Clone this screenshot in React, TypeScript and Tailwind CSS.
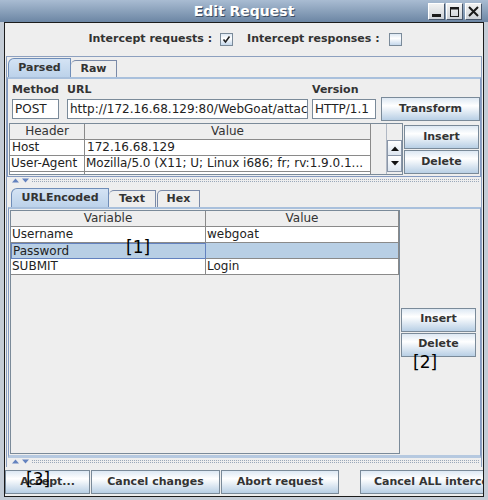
import React from "react";

const btn =
  "bg-[linear-gradient(to_bottom,#dde8f3_0%,#ffffff_35%,#b8cfe5_100%)] border border-[#7a8a99] text-[#333333] font-bold text-[11px] flex items-center justify-center whitespace-nowrap";

function Check({ checked }: { checked: boolean }) {
  return (
    <div className="w-[13px] h-[13px] border border-[#7a8a99] bg-[linear-gradient(to_bottom,#dde8f3,#ffffff_40%,#c5d8ec)] flex items-center justify-center">
      {checked && (
        <svg width="9" height="9" viewBox="0 0 9 9">
          <path d="M1.5 4.5 L3.5 7 L7.5 1.5" stroke="#222" strokeWidth="1.6" fill="none" />
        </svg>
      )}
    </div>
  );
}

function TitleBtn({ children }: { children: React.ReactNode }) {
  return (
    <div className="w-[17px] h-[17px] bg-[linear-gradient(to_bottom,#f2f2f2,#cdd2d8)] border border-t-white border-l-white border-r-[#48566a] border-b-[#48566a] flex items-center justify-center">
      {children}
    </div>
  );
}

function Arrows() {
  return (
    <svg width="18" height="5" viewBox="0 0 18 5" className="shrink-0">
      <path d="M0 4.5 L3.5 0.5 L7 4.5 Z" fill="#6382bf" />
      <path d="M10 0.5 L17 0.5 L13.5 4.5 Z" fill="#6382bf" />
    </svg>
  );
}

function Divider({ h }: { h: string }) {
  return (
    <div className={"flex items-start pl-[5px] pr-[2px] gap-[2px] shrink-0 " + h}>
      <div className="mt-[1px]">
        <Arrows />
      </div>
      <div className="flex-1 mt-[2px] h-[3px] border-y border-dotted border-[#9aa8ba]" />
    </div>
  );
}

export default function App() {
  return (
    <div className="w-[488px] h-[500px] overflow-hidden flex flex-col bg-[#c4ccd6] font-['DejaVu_Sans',sans-serif] relative">
      {/* Title bar */}
      <div className="h-[22px] shrink-0 flex items-center bg-[linear-gradient(to_bottom,#a9bcd2,#6c86a4)]">
        <div className="w-[60px]" />
        <div className="flex-1 text-center text-white font-bold text-[14px] leading-[22px] [text-shadow:1px_1px_0_#3d4d62]">
          Edit Request
        </div>
        <div className="w-[60px] flex items-center">
          <TitleBtn>
            <svg width="11" height="11" viewBox="0 0 11 11">
              <rect x="1" y="8" width="9" height="3" fill="#1a1a1a" />
            </svg>
          </TitleBtn>
          <div className="w-[1px]" />
          <TitleBtn>
            <svg width="11" height="11" viewBox="0 0 11 11">
              <rect x="1.5" y="1.5" width="8" height="9" stroke="#1a1a1a" strokeWidth="1" fill="none" />
              <rect x="1" y="1" width="9" height="2.5" fill="#1a1a1a" />
            </svg>
          </TitleBtn>
          <div className="w-[2px]" />
          <TitleBtn>
            <svg width="11" height="11" viewBox="0 0 11 11">
              <path d="M1 1 L10 10 M10 1 L1 10" stroke="#1a1a1a" strokeWidth="2" />
            </svg>
          </TitleBtn>
        </div>
      </div>

      {/* Content */}
      <div className="h-[475px] shrink-0 mx-[4px] border border-[#1c1c1c] bg-[#eeeeee] flex flex-col text-[#333333]">
        {/* Intercept row */}
        <div className="h-[33px] shrink-0 flex items-center justify-center font-bold text-[11px] pl-[2px]">
          <span>Intercept requests :</span>
          <div className="w-[8px]" />
          <Check checked />
          <div className="w-[14px]" />
          <span>Intercept responses :</span>
          <div className="w-[9px]" />
          <Check checked={false} />
        </div>

        {/* Split pane */}
        <div className="flex-1 mx-[1px] border-t border-x border-[#8da0bf] flex flex-col">
          {/* Top tabs */}
          <div className="h-[20px] shrink-0 flex items-end pl-[1px]">
            <div className="w-[63px] h-[19px] bg-[linear-gradient(to_bottom,#d4e3f4,#bcd2ea)] border border-b-0 border-[#6f8db8] rounded-tl-[6px] flex items-center justify-center font-bold text-[11px]">
              Parsed
            </div>
            <div className="w-[46px] h-[17px] bg-[#eeeeee] border border-l-0 border-b-0 border-[#7a8aa8] rounded-tl-[5px] flex items-center justify-center font-bold text-[11px]">
              Raw
            </div>
          </div>
          <div className="h-[100px] shrink-0 border border-[#8399c0] border-t-2 border-t-[#a9c0dc] flex flex-col">
            {/* Form row */}
            <div className="flex pt-[2px] pl-[4px]">
              <div className="w-[47px] flex flex-col">
                <div className="h-[18px] leading-[17px] font-bold text-[11px]">Method</div>
                <div className="h-[20px] border border-[#7a8a99] bg-white text-[12px] leading-[18px] px-[2px] text-[#222] overflow-hidden whitespace-nowrap">
                  POST
                </div>
              </div>
              <div className="w-[8px]" />
              <div className="w-[241px] flex flex-col">
                <div className="h-[18px] leading-[17px] font-bold text-[11px]">URL</div>
                <div className="h-[20px] border border-[#7a8a99] bg-white text-[12px] leading-[18px] px-[2px] text-[#222] overflow-hidden whitespace-nowrap">
                  http://172.16.68.129:80/WebGoat/attack?Screen=66
                </div>
              </div>
              <div className="w-[4px]" />
              <div className="w-[64px] flex flex-col">
                <div className="h-[18px] leading-[17px] font-bold text-[11px]">Version</div>
                <div className="h-[20px] border border-[#7a8a99] bg-white text-[12px] leading-[18px] px-[2px] text-[#222] overflow-hidden whitespace-nowrap">
                  HTTP/1.1
                </div>
              </div>
              <div className="w-[5px]" />
              <div className="w-[99px] flex flex-col">
                <div className="h-[16px]" />
                <div className={btn + " h-[24px]"}>Transform</div>
              </div>
            </div>
            {/* Header table row */}
            <div className="flex mt-[2px] pl-[1px]">
              <div className="w-[394px] h-[52px] border border-[#7a8a99] flex overflow-hidden">
                <div className="w-[376px] flex flex-col bg-[#eeeeee]">
                  <div className="h-[16px] flex text-[12px] leading-[15px] text-[#333]">
                    <div className="w-[75px] border-r border-b border-[#8a8a8a] text-center">Header</div>
                    <div className="w-[286px] border-r border-b border-[#8a8a8a] text-center">Value</div>
                  </div>
                  <div className="h-[16px] flex text-[12px] leading-[15px] text-[#222]">
                    <div className="w-[75px] bg-white border-r border-b border-[#8a8a8a] px-[2px] whitespace-nowrap overflow-hidden">Host</div>
                    <div className="w-[286px] bg-white border-r border-b border-[#8a8a8a] px-[2px] whitespace-nowrap overflow-hidden">172.16.68.129</div>
                  </div>
                  <div className="h-[16px] flex text-[12px] leading-[15px] text-[#222]">
                    <div className="w-[75px] bg-white border-r border-b border-[#8a8a8a] px-[1px] whitespace-nowrap overflow-hidden">User-Agent</div>
                    <div className="w-[286px] bg-white border-r border-b border-[#8a8a8a] px-[1px] whitespace-nowrap overflow-hidden">
                      Mozilla/5.0 (X11; U; Linux i686; fr; rv:1.9.0.1...
                    </div>
                  </div>
                  <div className="h-[2px] flex">
                    <div className="w-[75px] bg-white border-r border-[#8a8a8a]" />
                    <div className="w-[286px] bg-white border-r border-[#8a8a8a]" />
                  </div>
                </div>
                <div className="w-[16px] flex flex-col border-l border-[#b0b8c4] bg-[#eeeeee]">
                  <div className="h-[16px]" />
                  <div className="h-[16px] border border-[#8a96a8] bg-[linear-gradient(to_bottom,#ffffff,#dde6f0)] flex items-center justify-center">
                    <svg width="8" height="5" viewBox="0 0 8 5">
                      <path d="M0 5 L4 0.5 L8 5 Z" fill="#111" />
                    </svg>
                  </div>
                  <div className="h-[16px] border border-t-0 border-[#8a96a8] bg-[linear-gradient(to_bottom,#ffffff,#dde6f0)] flex items-center justify-center">
                    <svg width="8" height="5" viewBox="0 0 8 5">
                      <path d="M0 0 L8 0 L4 4.5 Z" fill="#111" />
                    </svg>
                  </div>
                </div>
              </div>
              <div className="ml-[1px] pt-[2px] flex flex-col gap-[1px]">
                <div className={btn + " w-[75px] h-[24px]"}>Insert</div>
                <div className={btn + " w-[75px] h-[24px]"}>Delete</div>
              </div>
            </div>
          </div>

          <Divider h="h-[7px]" />

          {/* Lower tabbed pane */}
          <div className="pt-[3px] ml-[1px] flex flex-col">
            <div className="h-[20px] flex items-end pl-[3px]">
              <div className="w-[98px] h-[19px] bg-[linear-gradient(to_bottom,#d4e3f4,#bcd2ea)] border border-b-0 border-[#6f8db8] rounded-tl-[6px] flex items-center justify-center font-bold text-[11px]">
                URLEncoded
              </div>
              <div className="w-[47px] h-[17px] bg-[#eeeeee] border border-l-0 border-b-0 border-[#7a8aa8] rounded-tl-[5px] flex items-center justify-center font-bold text-[11px]">
                Text
              </div>
              <div className="ml-[1px] w-[43px] h-[17px] bg-[#eeeeee] border border-b-0 border-[#7a8aa8] rounded-tl-[5px] flex items-center justify-center font-bold text-[11px]">
                Hex
              </div>
            </div>
            <div className="h-[251px] border border-[#8399c0] border-t-2 border-t-[#a9c0dc] border-b-[3px] border-b-[#b6c9e0] flex">
              <div className="ml-[1px] mt-[1px] w-[390px] h-[244px] border border-[#7a8a99] bg-[#eeeeee] flex flex-col">
                <div className="h-[16px] flex text-[12px] leading-[15px] text-[#333]">
                  <div className="w-[195px] border-r border-b border-[#8a8a8a] text-center">Variable</div>
                  <div className="w-[193px] border-r border-b border-[#8a8a8a] text-center">Value</div>
                </div>
                <div className="h-[16px] flex text-[12px] leading-[15px] text-[#222]">
                  <div className="w-[195px] bg-white border-r border-b border-[#8a8a8a] px-[1px]">Username</div>
                  <div className="w-[193px] bg-white border-r border-b border-[#8a8a8a] px-[1px]">webgoat</div>
                </div>
                <div className="h-[16px] flex text-[12px] leading-[14px] text-[#222]">
                  <div className="w-[195px] bg-[#b8cfe5] border border-[#6382bf] px-[1px]">Password</div>
                  <div className="w-[193px] bg-[#b8cfe5] border-r border-b border-[#8a8a8a] px-[1px]" />
                </div>
                <div className="h-[16px] flex text-[12px] leading-[15px] text-[#222]">
                  <div className="w-[195px] bg-white border-r border-b border-[#8a8a8a] px-[1px]">SUBMIT</div>
                  <div className="w-[193px] bg-white border-r border-b border-[#8a8a8a] px-[1px]">Login</div>
                </div>
              </div>
              <div className="ml-[1px] flex flex-col justify-center gap-[1px]">
                <div className={btn + " w-[75px] h-[24px]"}>Insert</div>
                <div className={btn + " w-[75px] h-[24px]"}>Delete</div>
              </div>
            </div>
          </div>

          <Divider h="h-[9px]" />
        </div>

        {/* Bottom buttons */}
        <div className="h-[29px] shrink-0 pt-[3px] flex overflow-hidden">
          <div className={btn + " w-[85px] h-[24px] shrink-0"}>Accept...</div>
          <div className="w-[1px] shrink-0" />
          <div className={btn + " w-[129px] h-[24px] shrink-0"}>Cancel changes</div>
          <div className="w-[1px] shrink-0" />
          <div className={btn + " w-[118px] h-[24px] shrink-0"}>Abort request</div>
          <div className="w-[21px] shrink-0" />
          <div className={btn + " w-[175px] h-[24px] shrink-0 !justify-start pl-[13px]"}>Cancel ALL intercepts</div>
        </div>
      </div>

      {/* Annotations */}
      <div className="absolute left-[126px] top-[236px] text-[17px] leading-[22px] text-black">[1]</div>
      <div className="absolute left-[413px] top-[351px] text-[17px] leading-[22px] text-black">[2]</div>
      <div className="absolute left-[26px] top-[468px] text-[17px] leading-[22px] text-black">[3]</div>
    </div>
  );
}
